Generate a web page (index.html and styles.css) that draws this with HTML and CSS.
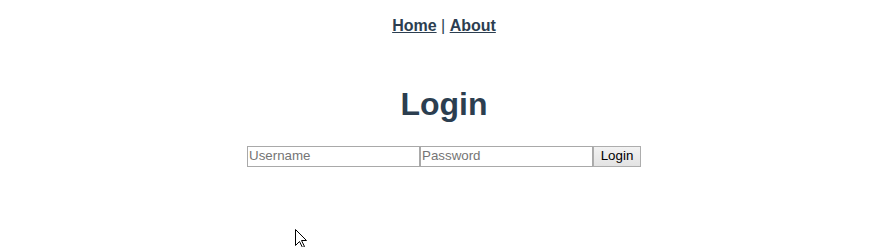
FILE: index.html
```html
<!DOCTYPE html>
<html lang="en">
<head>
<meta charset="utf-8">
<title>Login</title>
<link rel="stylesheet" href="styles.css">
</head>
<body>
<div class="app">
  <nav class="nav"><a href="#/">Home</a> | <a href="#/about">About</a></nav>
  <h1 class="title">Login</h1>
  <form class="login-form"><input class="field" type="text" placeholder="Username"><input class="field" type="password" placeholder="Password"><button class="btn" type="button">Login</button></form>
</div>
<svg class="cursor" width="13" height="20" viewBox="0 0 13 20" aria-hidden="true">
  <path d="M0.5 0.5 L0.5 16.5 L4.5 12.5 L7.5 18.5 L9.5 17.5 L6.5 11.5 L11.5 11.5 Z" fill="#fff" stroke="#000" stroke-width="1" stroke-linejoin="miter"/>
</svg>
</body>
</html>
```

FILE: styles.css
```css
html, body {
  margin: 0;
  background: #fff;
}
.app {
  padding-left: 13px;
  text-align: center;
  color: #2c3e50;
  font-family: "Liberation Sans", Arial, sans-serif;
}
.nav {
  padding: 17px 0 30px;
  font-size: 16px;
}
.nav a {
  font-weight: bold;
  color: #2c3e50;
  text-decoration: underline;
}
.title {
  margin: 21.44px 0;
  font-size: 32px;
  font-weight: bold;
}
.login-form {
  display: flex;
  justify-content: center;
  padding-top: 1px;
  margin: 0;
}
.field {
  box-sizing: border-box;
  width: 173px;
  height: 21px;
  margin: 0;
  padding: 0 1px 2px;
  border: 1px solid #a9a9a9;
  border-radius: 0;
  font-family: "Liberation Sans", Arial, sans-serif;
  font-size: 13.33px;
  color: #000;
  background: #fff;
  outline: none;
}
.field::placeholder {
  color: #757575;
}
.btn {
  box-sizing: border-box;
  width: 48px;
  height: 21px;
  margin: 0;
  padding: 0 0 1px;
  border: 1px solid #adadad;
  border-radius: 0;
  background: linear-gradient(#f2f2f2, #e3e3e3);
  font-family: "Liberation Sans", Arial, sans-serif;
  font-size: 13.33px;
  color: #000;
}
.cursor {
  position: absolute;
  left: 295px;
  top: 229px;
}
```
